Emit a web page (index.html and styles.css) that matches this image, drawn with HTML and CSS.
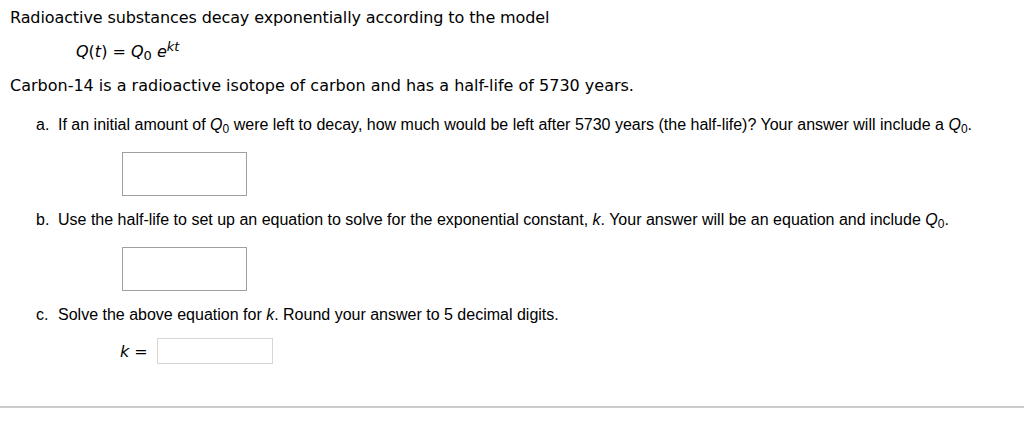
FILE: index.html
```html
<!DOCTYPE html>
<html>
<head>
<meta charset="utf-8">
<link rel="stylesheet" href="styles.css">
</head>
<body>
<div class="page">
  <p class="intro">Radioactive substances decay exponentially according to the model</p>
  <p class="formula"><i>Q</i>(<i>t</i>) = <i>Q</i><sub>0</sub> <i>e</i><sup><i>kt</i></sup></p>
  <p class="intro carbon">Carbon-14 is a radioactive isotope of carbon and has a half-life of 5730 years.</p>
  <ol class="parts">
    <li class="part">
      <p class="q"><span class="lbl">a.</span>If an initial amount of <i>Q</i><sub>0</sub> were left to decay, how much would be left after 5730 years (the half-life)? Your answer will include a <i>Q</i><sub>0</sub>.</p>
      <div class="box"></div>
    </li>
    <li class="part">
      <p class="q"><span class="lbl">b.</span>Use the half-life to set up an equation to solve for the exponential constant, <i>k</i>. Your answer will be an equation and include <i>Q</i><sub>0</sub>.</p>
      <div class="box"></div>
    </li>
    <li class="part">
      <p class="q"><span class="lbl">c.</span>Solve the above equation for <i>k</i>. Round your answer to 5 decimal digits.</p>
      <div class="answer"><span class="kvar"><i>k</i> =</span><span class="field"></span></div>
    </li>
  </ol>
  <hr class="rule">
</div>
</body>
</html>
```
FILE: styles.css
```css
html, body { margin: 0; padding: 0; background: #fff; }
.page { padding-top: 8px; color: #000; }
.intro {
  margin: 0 0 0 10px;
  font-family: "DejaVu Sans", Verdana, sans-serif;
  font-size: 16px;
  letter-spacing: -0.1px;
  line-height: 20px;
}
.formula {
  margin: 14px 0 0 76px;
  font-family: "DejaVu Sans", Verdana, sans-serif;
  font-size: 16px;
  line-height: 20px;
}
.formula sub, .formula sup { font-size: 13px; line-height: 0; }
.formula sub { vertical-align: -3px; }
.formula sup { vertical-align: 6px; }
.carbon { margin-top: 14px; letter-spacing: 0; }
.parts {
  list-style: none;
  margin: 20px 0 0 36px;
  padding: 0;
  font-family: "Liberation Sans", Arial, Helvetica, sans-serif;
  font-size: 16px;
}
.part { margin: 0; }
.q { margin: 0; line-height: 18px; }
.q sub { font-size: 12px; line-height: 0; vertical-align: -3px; }
.lbl { display: inline-block; width: 22px; }
.box {
  margin: 18px 0 15px 86px;
  width: 123px;
  height: 42px;
  border: 1px solid #a0a0a0;
}
.answer {
  display: flex;
  align-items: center;
  margin: 14px 0 0 84px;
}
.kvar {
  width: 37px;
  font-family: "DejaVu Sans", Verdana, sans-serif;
  font-size: 16px;
}
.field {
  width: 114px;
  height: 24px;
  border: 1px solid #d6d6d6;
}
.rule {
  margin: 42px 0 0 0;
  border: 0;
  border-top: 2px solid #cccccc;
}
```
